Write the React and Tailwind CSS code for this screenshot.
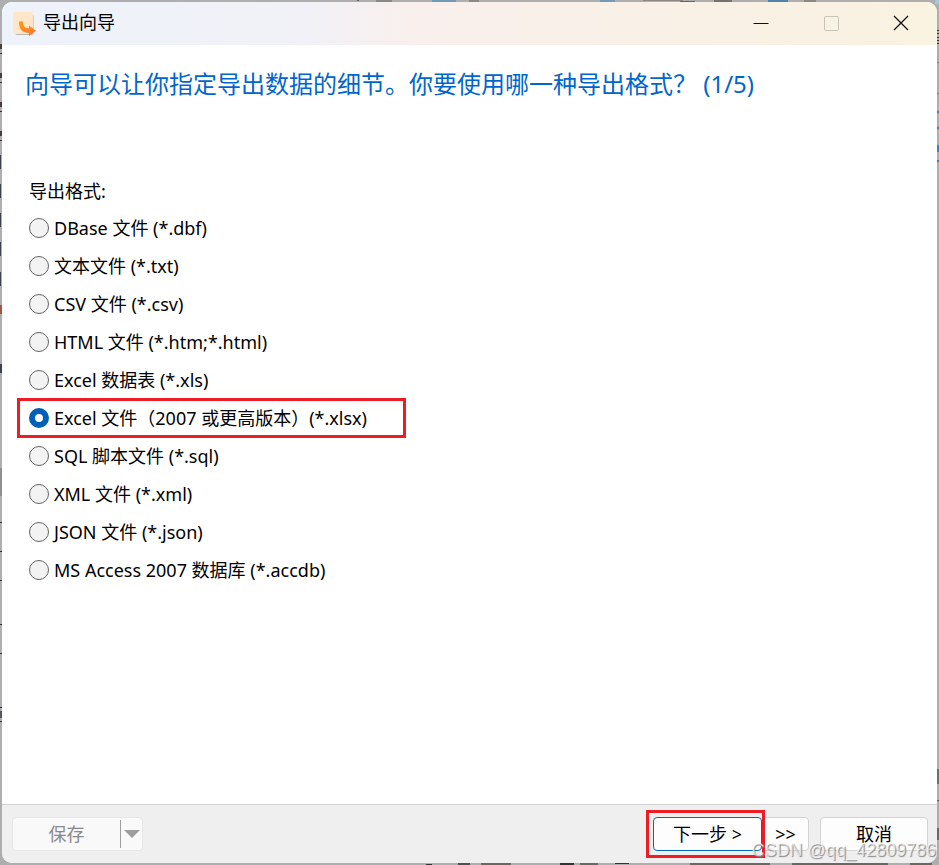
import { useState } from "react";

const FORMATS = [
  { id: "dbf", label: "DBase 文件 (*.dbf)" },
  { id: "txt", label: "文本文件 (*.txt)" },
  { id: "csv", label: "CSV 文件 (*.csv)" },
  { id: "html", label: "HTML 文件 (*.htm;*.html)" },
  { id: "xls", label: "Excel 数据表 (*.xls)" },
  { id: "xlsx", label: "Excel 文件（2007 或更高版本）(*.xlsx)", marked: true },
  { id: "sql", label: "SQL 脚本文件 (*.sql)" },
  { id: "xml", label: "XML 文件 (*.xml)" },
  { id: "json", label: "JSON 文件 (*.json)" },
  { id: "accdb", label: "MS Access 2007 数据库 (*.accdb)" },
];

// Slivers of the desktop that show around the dialog: [x, y, width, height, color]
const SLIVERS = [
  // left edge
  [0, 44, 2, 5, "#4a3c3c"],
  [0, 53, 2, 1, "#333333"],
  [0, 73, 2, 5, "#4a3c3c"],
  [0, 82, 2, 1, "#333333"],
  [0, 102, 2, 5, "#4a3c3c"],
  [0, 111, 2, 1, "#333333"],
  [0, 131, 2, 5, "#4a3c3c"],
  [0, 140, 2, 1, "#333333"],
  [0, 155, 1, 14, "#3a4252"],
  [0, 184, 1, 14, "#3a4252"],
  [0, 213, 1, 14, "#3a4252"],
  [0, 242, 1, 14, "#3a4252"],
  [0, 272, 1, 14, "#3a4252"],
  [0, 305, 2, 9, "#9a5a44"],
  [0, 364, 2, 9, "#3a4252"],
  [0, 468, 2, 28, "#8f8f8f"],
  [0, 522, 2, 1, "#333333"],
  [0, 551, 2, 1, "#333333"],
  [0, 580, 2, 1, "#333333"],
  [0, 624, 2, 1, "#333333"],
  [0, 653, 2, 1, "#333333"],
  [0, 707, 2, 1, "#333333"],
  [0, 711, 2, 7, "#55555f"],
  [0, 721, 2, 1, "#333333"],
  // top edge
  [357, 0, 2, 1, "#666666"],
  [376, 0, 16, 2, "#8c8884"],
  [432, 0, 24, 2, "#6f9bbd"],
  [469, 0, 10, 2, "#8c8884"],
  [600, 0, 15, 2, "#6f9bbd"],
  [643, 0, 40, 1, "#8c8884"],
  [680, 1, 15, 1, "#666666"],
  [714, 0, 18, 2, "#77706c"],
  [768, 0, 20, 2, "#4f83ad"],
  [804, 0, 12, 2, "#8c8884"],
  // right edge
  [935, 0, 4, 4, "#9cc8ea"],
  [937, 30, 2, 1, "#333333"],
  [937, 33, 2, 1, "#333333"],
  [937, 37, 2, 1, "#333333"],
  [937, 40, 2, 1, "#333333"],
  [937, 43, 2, 1, "#333333"],
  [937, 62, 2, 1, "#777777"],
  [937, 93, 2, 1, "#777777"],
  [937, 111, 2, 2, "#3b7fc4"],
  [937, 127, 2, 2, "#3b7fc4"],
  [937, 145, 2, 7, "#3b7fc4"],
  [937, 160, 2, 2, "#3b7fc4"],
  [937, 769, 2, 15, "#66706c"],
  [937, 800, 2, 1, "#555555"],
  [937, 828, 2, 12, "#66666c"],
  // bottom edge
  [426, 864, 6, 1, "#333333"],
  [458, 863, 12, 2, "#55504c"],
  [481, 863, 30, 2, "#6b6864"],
  [560, 863, 14, 2, "#333333"],
  [580, 863, 18, 2, "#6b6864"],
  [615, 863, 14, 1, "#333333"],
  [690, 863, 80, 2, "#6b6864"],
  [792, 863, 96, 2, "#6b6864"],
  [910, 863, 22, 2, "#6b6864"],
];

function AppIcon() {
  return (
    <svg viewBox="0 0 24 24" className="size-6" aria-hidden="true">
      <defs>
        <linearGradient id="arrow" x1="0" y1="0" x2="1" y2="1">
          <stop offset="0" stopColor="#ff9a0e" />
          <stop offset="1" stopColor="#ff7338" />
        </linearGradient>
      </defs>
      <rect x="2" y="2" width="18.6" height="21" rx="2.5" fill="#b9b4b0" />
      <rect x="0" y="0" width="20" height="22" rx="2.5" fill="#ffe6c8" />
      <path
        d="M6 10c0-1 3.800-1 3.800 0 .2 4 2.200 6.200 6.200 6.600V13.600L23 18.800 16 24v-3C9.600 21 6 17.400 6 10z"
        fill="url(#arrow)"
      />
    </svg>
  );
}

function TitleBar() {
  return (
    <header className="flex h-[43px] shrink-0 items-center bg-[linear-gradient(90deg,#eef2fa_0%,#f1f1f7_33%,#f9f0ee_43%,#f9f0e6_75%,#f9f3e1_100%)] pr-px pl-[11px]">
      <AppIcon />
      <h1 className="ml-[6px] flex-1 pb-1 text-[18px] leading-6">导出向导</h1>
      <button type="button" aria-label="最小化" className="grid h-full w-[70px] place-items-center pb-[2px]">
        <svg viewBox="0 0 16 16" className="size-4" aria-hidden="true">
          <path d="M0.5 8.5h15" stroke="#111" />
        </svg>
      </button>
      <button type="button" aria-label="最大化" disabled className="grid h-full w-[70px] place-items-center pb-[2px]">
        <svg viewBox="0 0 16 16" className="size-4" aria-hidden="true">
          <rect x="1.500" y="1.500" width="14" height="14" rx="1" fill="none" stroke="#c7c4b4" />
        </svg>
      </button>
      <button type="button" aria-label="关闭" className="grid h-full w-[70px] place-items-center pb-[2px]">
        <svg viewBox="0 0 16 16" className="size-4" aria-hidden="true">
          <path d="M1 1l14 14M15 1L1 15" stroke="#111" strokeWidth="1.3" />
        </svg>
      </button>
    </header>
  );
}

function FormatOption({ format, checked, onChange }) {
  return (
    <label className="relative flex h-[38px] items-center gap-[5px]">
      <input
        type="radio"
        name="format"
        value={format.id}
        checked={checked}
        onChange={onChange}
        className="size-5 shrink-0 appearance-none rounded-full border border-[#636363] bg-[#f3f3f3] checked:border-[6px] checked:border-[#005fb8] checked:bg-white"
      />
      <span>{format.label}</span>
      {format.marked && (
        <span className="pointer-events-none absolute -top-px -left-3 h-10 w-[389px] border-3 border-[#ee1c24]" />
      )}
    </label>
  );
}

export default function App() {
  const [selected, setSelected] = useState("xlsx");

  return (
    <div className="relative flex min-h-screen bg-[#aeaeae] p-[2px] font-['Noto_Sans','Noto_Sans_CJK_SC',sans-serif] text-[18px] leading-6 text-black">
      <svg className="absolute inset-0 size-full" aria-hidden="true">
        {SLIVERS.map(([x, y, w, h, fill]) => (
          <rect key={`${x}-${y}`} x={x} y={y} width={w} height={h} fill={fill} />
        ))}
      </svg>

      <div className="relative flex min-w-0 flex-1 flex-col overflow-hidden rounded-[10px] bg-white">
        <TitleBar />

        <main className="flex-1 px-[23px] pt-[23px]">
          <h2 className="text-[24px] leading-8 text-[#0066cc]">
            向导可以让你指定导出数据的细节。你要使用哪一种导出格式？ (1/5)
          </h2>
          <fieldset className="mt-[79px] pl-1">
            <legend className="mb-[6px]">导出格式:</legend>
            {FORMATS.map((format) => (
              <FormatOption
                key={format.id}
                format={format}
                checked={selected === format.id}
                onChange={() => setSelected(format.id)}
              />
            ))}
          </fieldset>
        </main>

        <footer className="flex h-[59px] shrink-0 items-center border-t border-[#d3d3d3] bg-[#efefef] pr-[9px] pl-[10px]">
          <div className="flex h-[34px] w-[131px] items-center rounded-[4px] border border-[#e7e7e7] bg-[#f9f9f9] text-[#8a8a8a]">
            <button type="button" disabled className="flex-1">
              保存
            </button>
            <button type="button" disabled aria-label="保存选项" className="grid h-7 w-[22px] place-items-center border-l border-[#9d9d9d]">
              <svg viewBox="0 0 16 8" className="h-2 w-4" aria-hidden="true">
                <path d="M0 0h16l-8 8z" fill="#9d9d9d" />
              </svg>
            </button>
          </div>

          <div className="relative ml-auto">
            <button type="button" className="h-[34px] w-[109px] rounded-[4px] border border-[#0067c0] bg-[#fdfdfd]">
              下一步 &gt;
            </button>
            <span className="pointer-events-none absolute -top-[7px] -left-[7px] h-12 w-[119px] border-3 border-[#ee1c24]" />
          </div>
          <button type="button" className="h-[34px] w-[47px] rounded-[4px] border border-[#d3d3d3] bg-[#fdfdfd]">
            &gt;&gt;
          </button>
          <button type="button" className="ml-[11px] h-[34px] w-[108px] rounded-[4px] border border-[#d3d3d3] bg-[#fdfdfd]">
            取消
          </button>
        </footer>
      </div>

      <span className="pointer-events-none absolute right-[3px] bottom-[3px] font-['Liberation_Sans',sans-serif] text-[18px] leading-6 text-white/60 [text-shadow:1px_1px_1px_#888]">
        CSDN @qq_42809786
      </span>
    </div>
  );
}
